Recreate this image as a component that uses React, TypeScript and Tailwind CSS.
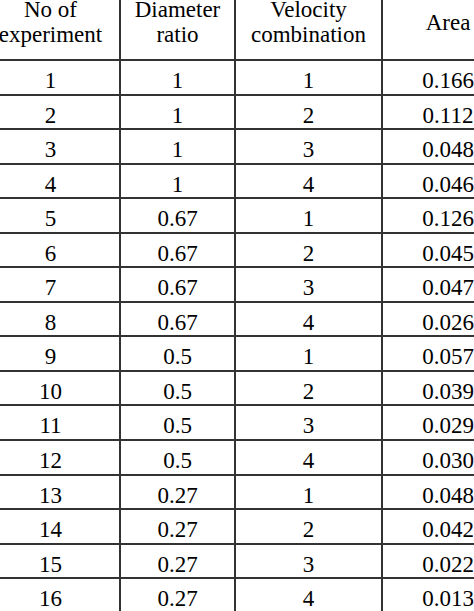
const rows: [string, string, string, string][] = [
  ['1', '1', '1', '0.166'],
  ['2', '1', '2', '0.112'],
  ['3', '1', '3', '0.048'],
  ['4', '1', '4', '0.046'],
  ['5', '0.67', '1', '0.126'],
  ['6', '0.67', '2', '0.045'],
  ['7', '0.67', '3', '0.047'],
  ['8', '0.67', '4', '0.026'],
  ['9', '0.5', '1', '0.057'],
  ['10', '0.5', '2', '0.039'],
  ['11', '0.5', '3', '0.029'],
  ['12', '0.5', '4', '0.030'],
  ['13', '0.27', '1', '0.048'],
  ['14', '0.27', '2', '0.042'],
  ['15', '0.27', '3', '0.022'],
  ['16', '0.27', '4', '0.013'],
];

const cols = 'grid grid-cols-[137px_115px_147px_132px]';

export default function App() {
  return (
    <div className="h-screen w-screen overflow-hidden bg-white font-['Liberation_Serif',serif] text-[23px] leading-[25px] text-black">
      <div className="ml-[-18px] mt-[-15px] w-[531px]">
        <div className={cols + ' h-[74px]'}>
          <div className="flex items-center justify-center text-center">
            No of
            <br />
            experiment
          </div>
          <div className="flex items-center justify-center border-l-2 border-[#333] text-center">
            Diameter
            <br />
            ratio
          </div>
          <div className="flex items-center justify-center border-l-2 border-[#333] text-center">
            Velocity
            <br />
            combination
          </div>
          <div className="flex items-center justify-center border-l-2 border-[#333] text-center">
            Area
          </div>
        </div>

        {rows.map((r) => (
          <div key={r[0]} className={cols + ' h-[34.55px] border-t-2 border-[#333]'}>
            <div className="pt-[7px] text-center">{r[0]}</div>
            <div className="border-l-2 border-[#333] pt-[7px] text-center">{r[1]}</div>
            <div className="border-l-2 border-[#333] pt-[7px] text-center">{r[2]}</div>
            <div className="border-l-2 border-[#333] pt-[7px] text-center">{r[3]}</div>
          </div>
        ))}
      </div>
    </div>
  );
}
